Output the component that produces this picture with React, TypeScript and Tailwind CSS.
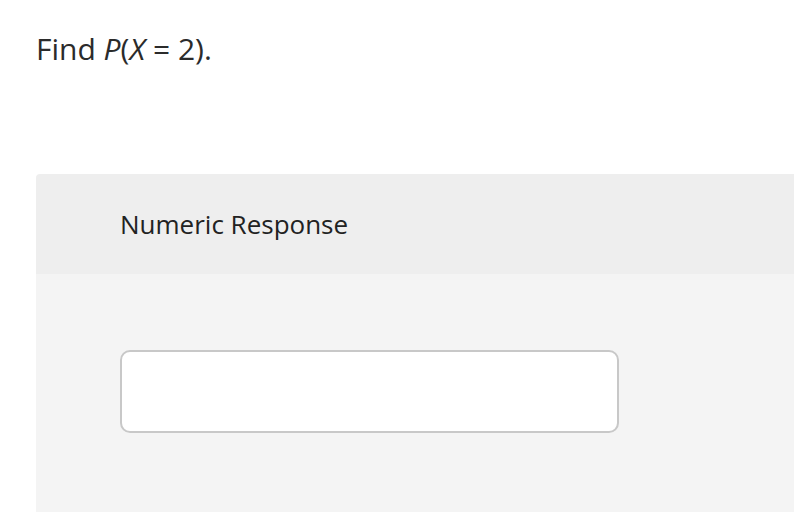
export default function App() {
  return (
    <div className="h-[512px] w-[794px] overflow-hidden bg-white font-['Open_Sans',sans-serif] text-[#222]">
      <div className="px-[36px] pt-[29px]">
        <p className="text-[30px] leading-[40px] text-[#2b2b2b]">
          Find <span className="italic">P</span>(<span className="italic">X</span> = 2).
        </p>
      </div>
      <div className="ml-[36px] mt-[105px] rounded-tl-[4px] overflow-hidden">
        <div className="flex h-[100px] items-center bg-[#eeeeee] pl-[84px]">
          <span className="text-[26px] text-[#222]">Numeric Response</span>
        </div>
        <div className="h-[300px] bg-[#f4f4f4] pl-[84px] pt-[76px]">
          <input
            type="text"
            className="h-[83px] w-[499px] rounded-[10px] border-2 border-[#c8c8c8] bg-white px-3 outline-none"
          />
        </div>
      </div>
    </div>
  );
}
